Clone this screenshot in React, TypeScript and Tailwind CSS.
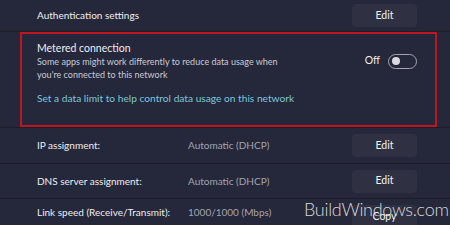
import React from "react";

function Btn({ label }: { label: string }) {
  return (
    <div className="w-[65px] h-[23px] rounded-[4px] bg-[#2f3142] text-[#f2f2f4] text-[10.5px] flex items-center justify-center">
      {label}
    </div>
  );
}

function Row({
  label,
  value,
  btn,
  h,
}: {
  label: string;
  value?: string;
  btn: string;
  h: string;
}) {
  return (
    <div className={`bg-[#25273a] flex items-center pl-[37px] pr-[33px] shrink-0 ${h}`}>
      <div className="w-[151px] text-[10px] text-[#eeeef2] whitespace-nowrap">{label}</div>
      {value && <div className="text-[10px] text-[#a3a5b0] whitespace-nowrap">{value}</div>}
      <div className="ml-auto">
        <Btn label={btn} />
      </div>
    </div>
  );
}

export default function App() {
  return (
    <div className="relative w-[450px] h-[225px] overflow-hidden bg-[#1c1d29] flex flex-col gap-px font-['Lato',sans-serif]">
      <Row label="Authentication settings" btn="Edit" h="h-[31px]" />
      <div className="bg-[#25273a] h-[95px] shrink-0 flex">
        <div className="ml-[20px] w-[417px] h-[95px] border-2 border-[#bd1620] pl-[15px] pr-[18px] pt-[7px]">
          <div className="flex items-center">
            <div className="flex flex-col">
              <div className="text-[10.5px] leading-[14px] text-[#eeeef2]">Metered connection</div>
              <div className="text-[9px] leading-[13px] text-[#c9cad2]">
                Some apps might work differently to reduce data usage when
              </div>
              <div className="text-[9px] leading-[13px] text-[#c9cad2]">
                you're connected to this network
              </div>
            </div>
            <div className="ml-auto flex items-center gap-[8px]">
              <span className="text-[10.5px] text-[#eeeef2]">Off</span>
              <div className="w-[29px] h-[15px] rounded-full border border-[#a3a4ac] flex items-center">
                <div className="w-[8px] h-[8px] rounded-full bg-[#d9d9de] ml-[3px]" />
              </div>
            </div>
          </div>
          <div className="mt-[10px] text-[10.2px] leading-[14px] text-[#7cc6dc]">
            Set a data limit to help control data usage on this network
          </div>
        </div>
      </div>
      <Row label="IP assignment:" value="Automatic (DHCP)" btn="Edit" h="h-[35px]" />
      <Row label="DNS server assignment:" value="Automatic (DHCP)" btn="Edit" h="h-[34px]" />
      <div className="bg-[#25273a] flex items-start pl-[37px] pr-[33px] h-[30px] shrink-0 pt-[6px]">
        <div className="w-[151px] text-[10px] text-[#eeeef2] whitespace-nowrap">
          Link speed (Receive/Transmit):
        </div>
        <div className="text-[10px] text-[#a3a5b0] whitespace-nowrap">1000/1000 (Mbps)</div>
        <div className="ml-auto">
          <Btn label="Copy" />
        </div>
      </div>
      <div className="absolute left-[304px] top-[197px] text-[18px] leading-[24px] font-light tracking-[-0.3px] text-[#eeeef0]/90 font-['Lato',sans-serif]">
        BuildWindows.com
      </div>
    </div>
  );
}
